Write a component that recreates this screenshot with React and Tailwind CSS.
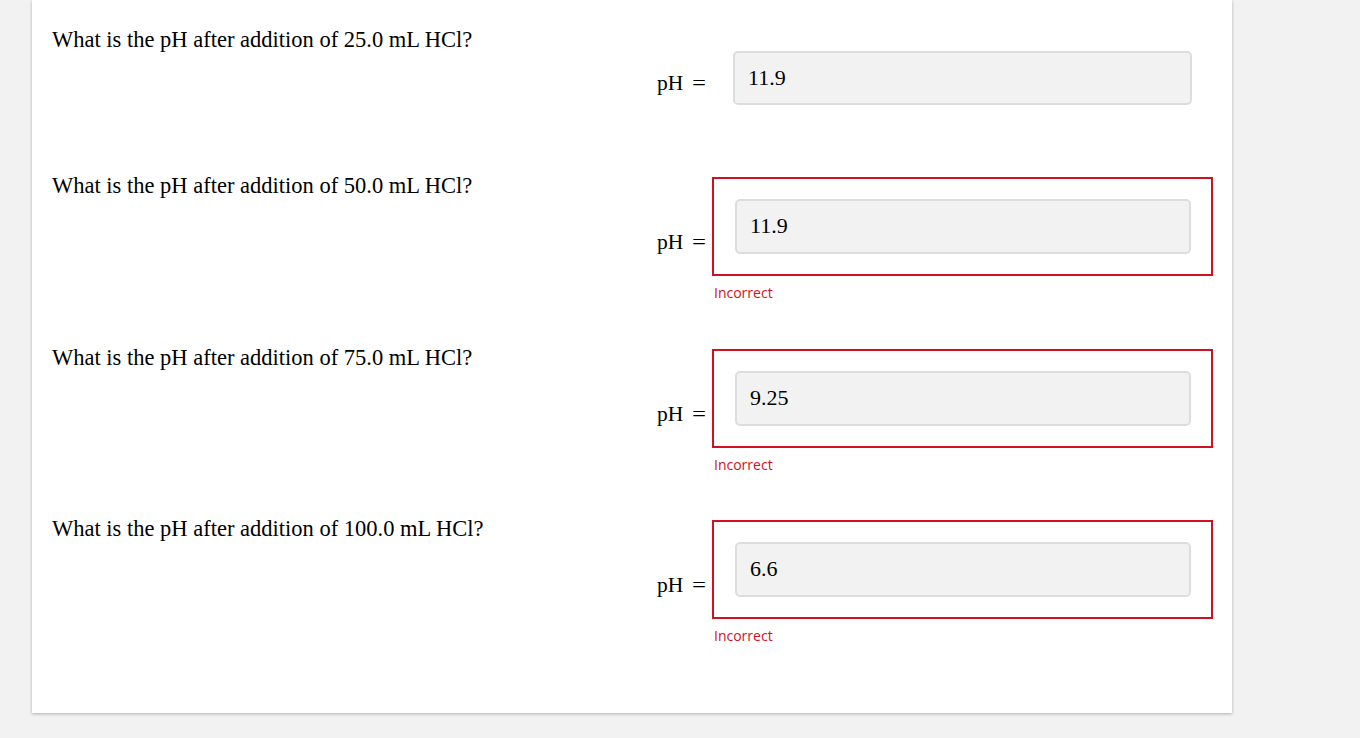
import React from "react";

const serif = { fontFamily: '"Liberation Serif", "Times New Roman", serif' };

function Answer({ value, incorrect, labelTop }) {
  return (
    <div className="flex flex-col">
      <div className="flex items-start">
        <div
          className="w-[55px] text-[21.5px] leading-[23px] text-black flex items-start"
          style={{ ...serif, marginTop: labelTop }}
        >
          <span>pH</span>
          <span className="ml-[9px] scale-x-[1.15] origin-left">=</span>
        </div>
        <div
          className={
            "w-[501px] border-2 pt-[20px] pb-[20px] " +
            (incorrect
              ? "border-[#cf1124] pl-[21px] pr-[20px]"
              : "border-transparent pl-[19px] pr-[19px]")
          }
        >
          <div
            className={
              "w-full rounded-[5px] border-2 border-[#dddddd] bg-[#f2f2f2] pl-[13px] pb-[2px] flex items-center text-[22px] text-black " +
              (incorrect ? "h-[55px]" : "h-[54px]")
            }
            style={serif}
          >
            {value}
          </div>
        </div>
      </div>
      {incorrect && (
        <div
          className="ml-[57px] mt-[8px] text-[14px] leading-[18px] text-[#cf1124]"
          style={{ fontFamily: '"Open Sans", "Noto Sans", sans-serif' }}
        >
          Incorrect
        </div>
      )}
    </div>
  );
}

function Block({ question, value, incorrect, height, labelTop, qTop }) {
  return (
    <div className="flex items-start" style={{ height }}>
      <p
        className="w-[605px] text-[22.5px] leading-[23px] text-black"
        style={{ ...serif, marginTop: qTop }}
      >
        {question}
      </p>
      <Answer value={value} incorrect={incorrect} labelTop={labelTop} />
    </div>
  );
}

export default function App() {
  return (
    <div className="min-h-[738px] w-full bg-[#f2f2f2]">
      <div className="ml-[32px] w-[1200px] h-[713px] bg-white shadow-[0_1px_3px_rgba(0,0,0,0.28)] pl-[20px] pt-[29px]">
        <Block
          question="What is the pH after addition of 25.0 mL HCl?"
          value="11.9"
          incorrect={false}
          height={148}
          labelTop={43}
          qTop={-1}
        />
        <Block
          question="What is the pH after addition of 50.0 mL HCl?"
          value="11.9"
          incorrect
          height={172}
          labelTop={54}
          qTop={-3}
        />
        <Block
          question="What is the pH after addition of 75.0 mL HCl?"
          value="9.25"
          incorrect
          height={171}
          labelTop={54}
          qTop={-3}
        />
        <Block
          question="What is the pH after addition of 100.0 mL HCl?"
          value="6.6"
          incorrect
          height={171}
          labelTop={54}
          qTop={-3}
        />
      </div>
    </div>
  );
}
